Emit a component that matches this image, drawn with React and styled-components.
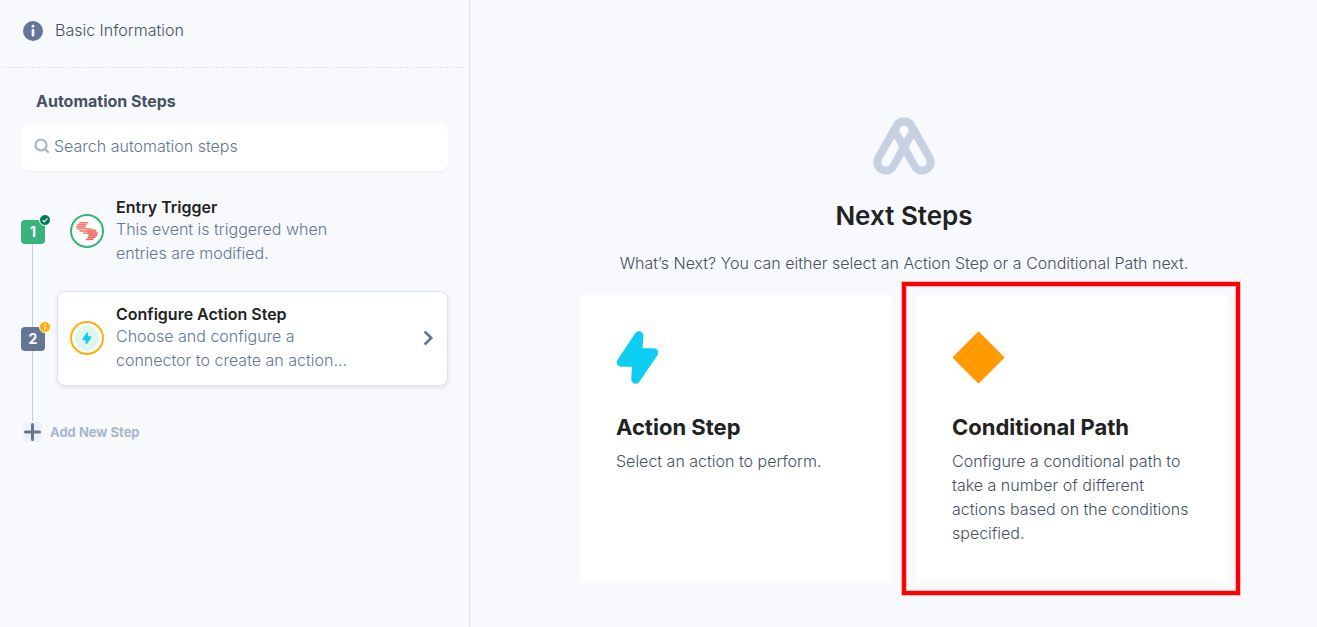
import React from 'react';
import styled, { createGlobalStyle } from 'styled-components';

const GlobalStyle = createGlobalStyle`
  *, *::before, *::after { box-sizing: border-box; }
  body {
    margin: 0;
    background: #f8f9fd;
    color: #475161;
    font-family: Inter, "Liberation Sans", sans-serif;
    font-size: 16px;
    font-weight: 300;
    line-height: 24px;
  }
  h1, h2, h3, p, ol { margin: 0; padding: 0; }
  button, input { font: inherit; color: inherit; }
  svg { display: block; flex: none; }
`;

const Layout = styled.div`
  display: grid;
  grid-template-columns: minmax(360px, 470px) minmax(0, 1fr);
  min-height: 100vh;
`;

const Sidebar = styled.aside`
  border-right: 1px solid #dde3ee;
`;

const InfoLink = styled.a`
  display: flex;
  align-items: center;
  gap: 12px;
  margin: 0 6px 0 2px;
  padding: 18px 21px 24px;
  border-bottom: 1px dashed #dde3ee;
  color: inherit;
  text-decoration: none;
  line-height: 25px;
`;

const StepsPanel = styled.section`
  padding: 21px;
`;

const PanelTitle = styled.h2`
  padding-left: 15px;
  font-size: 16px;
  font-weight: 700;
  line-height: 24px;
`;

const SearchBox = styled.label`
  display: flex;
  align-items: center;
  gap: 4px;
  height: 47px;
  margin: 11px 0 13px;
  padding: 0 13px 3px;
  border-radius: 8px;
  background: #fff;
  box-shadow: 0 1px 1px #e9edf4;
  color: #a9b6cb;
`;

const SearchInput = styled.input`
  flex: 1;
  min-width: 0;
  padding: 0;
  border: 0;
  outline: 0;
  background: transparent;
  color: #647696;
  &::placeholder { color: #647696; opacity: 1; }
`;

const StepList = styled.ol`
  position: relative;
  display: flex;
  flex-direction: column;
  gap: 12px;
  padding-bottom: 35px;
  list-style: none;
  &::before {
    content: "";
    position: absolute;
    top: 48px;
    bottom: 0;
    left: 11px;
    width: 1px;
    background: #c3cce0;
  }
`;

const StepRow = styled.li`
  display: flex;
  align-items: center;
  gap: 12px;
`;

const StepNumber = styled.span`
  position: relative;
  flex: none;
  width: 24px;
  height: 24px;
  margin-top: 1px;
  border-radius: 4px;
  background: ${(p) => p.$color};
  color: #fff;
  font-size: 14px;
  font-weight: 700;
  text-align: center;
`;

const StatusMark = styled.span`
  position: absolute;
  top: -6px;
  right: -6px;
`;

const StepCard = styled.button`
  flex: 1;
  min-width: 0;
  display: flex;
  align-items: center;
  gap: 12px;
  padding: 12px 12px 13px;
  border: 1px solid ${(p) => (p.$active ? '#dde3ee' : 'transparent')};
  border-radius: 8px;
  background: ${(p) => (p.$active ? '#fff' : 'transparent')};
  box-shadow: ${(p) => (p.$active ? '0 2px 4px rgba(100, 118, 150, 0.16)' : 'none')};
  text-align: left;
  cursor: pointer;
`;

const StepText = styled.span`
  flex: 1;
  min-width: 0;
`;

const StepName = styled.span`
  display: block;
  color: #222;
  font-weight: 600;
  line-height: 20px;
`;

const StepSummary = styled.span`
  display: block;
  max-width: 240px;
  color: #647696;
`;

const AddStep = styled.button`
  display: flex;
  align-items: center;
  gap: 8px;
  padding: 0 2px;
  border: 0;
  background: transparent;
  color: #a9b6cb;
  font-size: 13px;
  font-weight: 700;
  line-height: 22px;
  cursor: pointer;
`;

const Main = styled.main`
  display: flex;
  flex-direction: column;
  align-items: center;
  padding: 117px 20px 44px 41px;
`;

const MainTitle = styled.h1`
  margin-top: 25px;
  color: #222;
  font-size: 26px;
  font-weight: 600;
  line-height: 32px;
`;

const Lead = styled.p`
  margin: 19px 0 20px;
  text-align: center;
`;

const Options = styled.div`
  display: grid;
  grid-template-columns: repeat(2, minmax(0, 1fr));
  gap: 24px;
  width: 100%;
  max-width: 648px;
`;

const OptionCard = styled.button`
  position: relative;
  display: flex;
  flex-direction: column;
  align-items: flex-start;
  min-height: 288px;
  padding: 36px;
  border: 0;
  background: #fff;
  text-align: left;
  cursor: pointer;
`;

const OptionTitle = styled.span`
  margin: 27px 0 6px;
  color: #222;
  font-size: 22px;
  font-weight: 700;
  line-height: 32px;
`;

const Highlight = styled.span`
  position: absolute;
  inset: -13px -12px -12px -14px;
  border: 4px solid #f00;
  box-shadow: 0 0 0 1px #fbb, inset 0 0 0 1px #fbb;
  pointer-events: none;
`;

function InfoIcon() {
  return (
    <svg width="20" height="20" viewBox="0 0 20 20" aria-hidden="true">
      <circle cx="10" cy="10" r="10" fill="#647696" />
      <circle cx="10" cy="5.2" r="1.4" fill="#f8f9fd" />
      <path d="M10 9v5.2" stroke="#f8f9fd" strokeWidth="2.6" strokeLinecap="round" />
    </svg>
  );
}

function SearchIcon() {
  return (
    <svg width="16" height="16" viewBox="0 0 16 16" fill="none" stroke="#a9b6cb" strokeWidth="2.2" strokeLinecap="round" aria-hidden="true">
      <circle cx="7" cy="7" r="5.5" />
      <path d="M11.2 11.2L14 14" />
    </svg>
  );
}

function DoneMark() {
  return (
    <svg width="12" height="12" viewBox="0 0 12 12" overflow="visible" aria-hidden="true">
      <circle cx="6" cy="6" r="5.5" fill="#007a52" stroke="#fff" />
      <path d="M3.6 6.2l1.7 1.7 3.2-3.5" fill="none" stroke="#fff" strokeWidth="1.2" />
    </svg>
  );
}

function AttentionMark() {
  return (
    <svg width="12" height="12" viewBox="0 0 12 12" overflow="visible" aria-hidden="true">
      <circle cx="6" cy="6" r="5.5" fill="#ffae0a" stroke="#fff" />
      <circle cx="6" cy="3.6" r="0.8" fill="#fff" />
      <path d="M6 5.4v3.4" stroke="#fff" strokeWidth="1.4" />
    </svg>
  );
}

const stripes = [
  [9.5, 18, 8.6], [7.5, 16.5, 10.7], [6.3, 15.5, 12.8], [7, 22.5, 14.9], [9.5, 26, 17],
  [13, 27.5, 19.1], [18.5, 27.5, 21.2], [18, 25.5, 23.3], [16, 23, 25.4],
];

function EntryIcon() {
  return (
    <svg width="34" height="34" viewBox="0 0 34 34" aria-hidden="true">
      <circle cx="17" cy="17" r="16" fill="#fff" stroke="#38b37e" strokeWidth="2" />
      <path d="M10 8h8.5l-3.5 4.5 1.5 2.5h-8L6 13.5zM17 15h8l3 4-1.5 3-3.5 4.2h-7l2.8-4.2-1.3-2z" fill="#f7b3ab" />
      {stripes.map(([from, to, y], i) => (
        <path key={y} d={`M${from} ${y}H${to}`} stroke={i < 4 ? '#f2766b' : '#ea5f52'} strokeWidth="1.3" />
      ))}
    </svg>
  );
}

const boltPath = 'M23 4.7L21.7 21.7H37.7L19.7 48.3L20.7 31.3H5.3Z';

function ActionIcon() {
  return (
    <svg width="34" height="34" viewBox="0 0 34 34" aria-hidden="true">
      <circle cx="17" cy="17" r="16" fill="#fff" stroke="#ffae0a" strokeWidth="2" />
      <circle cx="17" cy="17" r="12.3" fill="#e0f5ec" />
      <path transform="translate(12.2 11.4) scale(0.22)" d={boltPath} fill="#0dcdf2" stroke="#0dcdf2" strokeWidth="9" strokeLinejoin="round" />
    </svg>
  );
}

function Chevron() {
  return (
    <svg width="14" height="16" viewBox="0 0 14 16" fill="none" stroke="#647696" strokeWidth="2.6" aria-hidden="true">
      <path d="M3.6 1.5L10.2 8l-6.6 6.5" />
    </svg>
  );
}

function PlusIcon() {
  return (
    <svg width="19" height="20" viewBox="0 0 19 20" aria-hidden="true">
      <rect width="19" height="20" rx="4" fill="#edf1f7" />
      <path d="M9.5 2.5v15M2.5 10h14" stroke="#647696" strokeWidth="3" strokeLinecap="round" />
    </svg>
  );
}

function Logo() {
  return (
    <svg width="62" height="58" viewBox="0 0 62 58" fill="none" stroke="#c8d1e2" strokeWidth="8" aria-hidden="true">
      <path d="M23.6 8.8L5.4 41A8.5 8.5 0 0 0 20.2 49.4L38.4 17.2A8.5 8.5 0 0 0 23.6 8.8Z" />
      <path d="M38.4 8.8L56.6 41A8.5 8.5 0 0 1 41.8 49.4L23.6 17.2A8.5 8.5 0 0 1 38.4 8.8Z" />
    </svg>
  );
}

function Bolt() {
  return (
    <svg width="43" height="53" viewBox="0 0 43 53" aria-hidden="true">
      <path d={boltPath} fill="#0dcdf2" stroke="#0dcdf2" strokeWidth="9" strokeLinejoin="round" />
    </svg>
  );
}

function Diamond() {
  return (
    <svg width="53" height="53" viewBox="0 0 53 53" aria-hidden="true">
      <path d="M26.5 1.8L51.2 26.5L26.5 51.2L1.8 26.5Z" fill="#ff9a00" stroke="#ff9a00" strokeWidth="2" strokeLinejoin="round" />
    </svg>
  );
}

export default function App() {
  return (
    <>
      <GlobalStyle />
      <Layout>
        <Sidebar>
          <InfoLink href="#basic-information">
            <InfoIcon />
            Basic Information
          </InfoLink>
          <StepsPanel>
            <PanelTitle>Automation Steps</PanelTitle>
            <SearchBox>
              <SearchIcon />
              <SearchInput type="text" aria-label="Search automation steps" placeholder="Search automation steps" />
            </SearchBox>
            <StepList>
              <StepRow>
                <StepNumber $color="#38b37e">
                  1
                  <StatusMark><DoneMark /></StatusMark>
                </StepNumber>
                <StepCard type="button">
                  <EntryIcon />
                  <StepText>
                    <StepName>Entry Trigger</StepName>
                    <StepSummary>This event is triggered when entries are modified.</StepSummary>
                  </StepText>
                </StepCard>
              </StepRow>
              <StepRow>
                <StepNumber $color="#647696">
                  2
                  <StatusMark><AttentionMark /></StatusMark>
                </StepNumber>
                <StepCard type="button" $active>
                  <ActionIcon />
                  <StepText>
                    <StepName>Configure Action Step</StepName>
                    <StepSummary>Choose and configure a connector to create an action...</StepSummary>
                  </StepText>
                  <Chevron />
                </StepCard>
              </StepRow>
            </StepList>
            <AddStep type="button">
              <PlusIcon />
              Add New Step
            </AddStep>
          </StepsPanel>
        </Sidebar>
        <Main>
          <Logo />
          <MainTitle>Next Steps</MainTitle>
          <Lead>What’s Next? You can either select an Action Step or a Conditional Path next.</Lead>
          <Options>
            <OptionCard type="button">
              <Bolt />
              <OptionTitle>Action Step</OptionTitle>
              <span>Select an action to perform.</span>
            </OptionCard>
            <OptionCard type="button">
              <Diamond />
              <OptionTitle>Conditional Path</OptionTitle>
              <span>Configure a conditional path to take a number of different actions based on the conditions specified.</span>
              <Highlight />
            </OptionCard>
          </Options>
        </Main>
      </Layout>
    </>
  );
}
